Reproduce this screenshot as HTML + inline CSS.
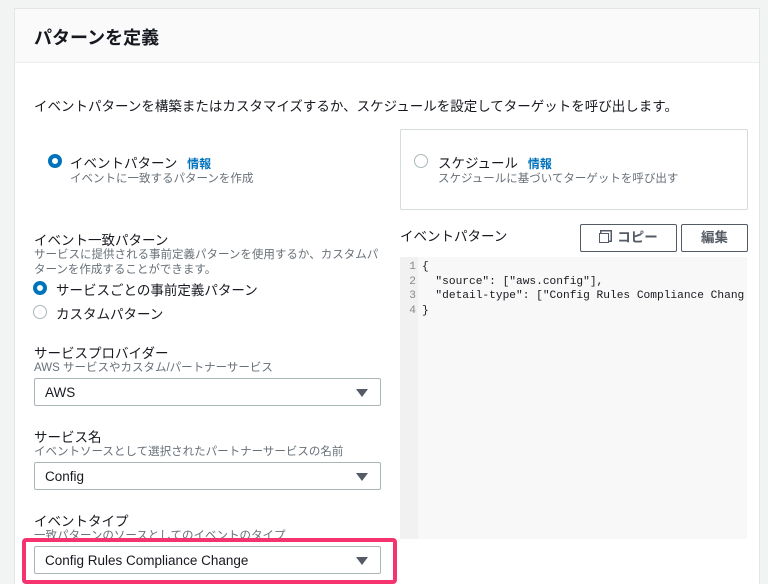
<!DOCTYPE html>
<html><head><meta charset="utf-8"><style>
*{box-sizing:border-box;margin:0;padding:0}
html,body{width:768px;height:584px;overflow:hidden}
body{background:#f2f3f3;font-family:"Liberation Sans","Noto Sans CJK JP",sans-serif;color:#16191f;position:relative}
.a{position:absolute;white-space:nowrap}
.card{position:absolute;left:14px;top:8px;width:746px;height:576px;background:#fff;border:1px solid #e4e6e6;border-bottom:none}
.hdr{position:absolute;left:14px;top:8px;width:746px;height:55px;background:#fafafa;border:1px solid #e4e6e6;border-bottom:1px solid #eaeded}
.sub{font-size:11.5px;color:#687078}
.lbl{font-size:13.5px}
.info{color:#0073bb;font-size:12px;font-weight:bold}
.rad{position:absolute;width:14px;height:14px;border-radius:50%;border:1px solid #aab7b8;background:#fff}
.rad.on{border:4px solid #0073bb}
.sel{position:absolute;left:34px;width:347px;height:28px;border:1px solid #aab7b8;border-radius:2px;background:#fff;font-size:13.5px;padding:6px 10px}
.sel:after{content:"";position:absolute;right:12px;top:10px;border-left:6px solid transparent;border-right:6px solid transparent;border-top:8px solid #545b64}
.btn{position:absolute;top:224px;height:28px;border:1px solid #545b64;border-radius:2px;background:#fff;font-size:13.5px;font-weight:bold;color:#545b64;text-align:center;line-height:26px}
.code{position:absolute;left:400px;top:257px;width:347px;height:282px;background:#f8f8f8;overflow:hidden}
.gut{position:absolute;left:0;top:0;width:18px;height:100%;background:#f1f1f1}
.cl{position:absolute;font-family:"Liberation Mono",monospace;font-size:11.2px;color:#16191f;white-space:pre;left:0}
.ln{color:#888;display:inline-block;width:16px;text-align:right;margin-right:6px}
</style></head><body>
<div class="card"></div>
<div class="hdr"></div>
<div class="a" style="left:34px;top:24px;font-size:18px;font-weight:bold">パターンを定義</div>
<div class="a" style="left:34px;top:95px;font-size:13.5px">イベントパターンを構築またはカスタマイズするか、スケジュールを設定してターゲットを呼び出します。</div>

<div class="rad on" style="left:48px;top:154px"></div>
<div class="a lbl" style="left:70px;top:152px">イベントパターン <span class="info" style="margin-left:6px">情報</span></div>
<div class="a sub" style="left:70px;top:170px">イベントに一致するパターンを作成</div>

<div class="a" style="left:400px;top:129px;width:348px;height:81px;border:1px solid #d5dbdb;border-radius:2px"></div>
<div class="rad" style="left:414px;top:154px"></div>
<div class="a lbl" style="left:438px;top:152px">スケジュール <span class="info" style="margin-left:6px">情報</span></div>
<div class="a sub" style="left:438px;top:170px">スケジュールに基づいてターゲットを呼び出す</div>

<div class="a lbl" style="left:34px;top:229px">イベント一致パターン</div>
<div class="a sub" style="left:34px;top:246px">サービスに提供される事前定義パターンを使用するか、カスタムパ</div>
<div class="a sub" style="left:34px;top:261px">ターンを作成することができます。</div>
<div class="rad on" style="left:33px;top:281px"></div>
<div class="a lbl" style="left:56px;top:279px">サービスごとの事前定義パターン</div>
<div class="rad" style="left:33px;top:305px"></div>
<div class="a lbl" style="left:56px;top:303px">カスタムパターン</div>

<div class="a lbl" style="left:34px;top:342px">サービスプロバイダー</div>
<div class="a sub" style="left:34px;top:359px">AWS サービスやカスタム/パートナーサービス</div>
<div class="sel" style="top:378px">AWS</div>

<div class="a lbl" style="left:34px;top:426px">サービス名</div>
<div class="a sub" style="left:34px;top:443px">イベントソースとして選択されたパートナーサービスの名前</div>
<div class="sel" style="top:462px">Config</div>

<div class="a lbl" style="left:34px;top:510px">イベントタイプ</div>
<div class="a sub" style="left:34px;top:527px">一致パターンのソースとしてのイベントのタイプ</div>
<div class="a" style="left:22px;top:538px;width:375px;height:46px;border:4px solid #f5336e;border-radius:4px;background:#fff"></div>
<div class="sel" style="top:546px">Config Rules Compliance Change</div>

<div class="a lbl" style="left:400px;top:225px">イベントパターン</div>
<div class="btn" style="left:580px;width:97px"><span style="display:inline-block;width:10px;height:10px;border:1.5px solid #545b64;margin-right:8px;position:relative;top:1px;box-shadow:2px -2px 0 -0.5px #fff,2px -2px 0 1px #545b64"></span>コピー</div>
<div class="btn" style="left:681px;width:67px">編集</div>

<div class="code"><div class="gut"></div>
<div class="cl" style="top:4px"><span class="ln">1</span>{</div>
<div class="cl" style="top:18.5px"><span class="ln">2</span>  "source": ["aws.config"],</div>
<div class="cl" style="top:33px"><span class="ln">3</span>  "detail-type": ["Config Rules Compliance Chang</div>
<div class="cl" style="top:47.5px"><span class="ln">4</span>}</div>
</div>
</body></html>
